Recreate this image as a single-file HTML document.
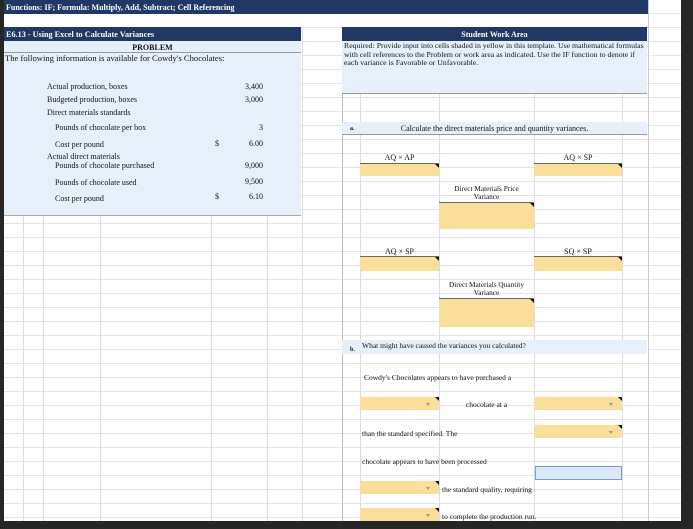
<!DOCTYPE html>
<html><head><meta charset="utf-8"><style>
*{margin:0;padding:0;box-sizing:border-box}
html,body{width:693px;height:529px;overflow:hidden;background:#262626}
#s{position:absolute;left:4px;top:0;width:677px;height:521px;background:#fff;
background-image:repeating-linear-gradient(to bottom,transparent 0,transparent 13px,#e3e3e3 13px,#e3e3e3 14px);background-position:0 0}
.v{position:absolute;top:0;height:521px;width:1px;background:#dcdcdc}
.a{position:absolute;font-family:"Liberation Serif",serif;font-size:8px;color:#111;white-space:nowrap;line-height:9px}
.n{background:#1f3864;position:absolute}
.lb{background:#e6f0fb;position:absolute}
.y{background:#fadf9a;position:absolute}
.y:after{content:"";position:absolute;right:0;top:0;border-top:4px solid #111;border-left:4px solid transparent}
.dd:before{content:"";position:absolute;right:9px;top:6px;border-top:3px solid #999;border-left:2px solid transparent;border-right:2px solid transparent}
.w{color:#fff;font-weight:bold}
.b{font-weight:bold}
</style></head><body>
<div id="s"></div>
<div class="v" style="left:23px"></div><div class="v" style="left:43px"></div><div class="v" style="left:100px"></div><div class="v" style="left:211px"></div><div class="v" style="left:267px"></div><div class="v" style="left:302px"></div><div class="v" style="left:342px;background:#bbb;top:94px;height:427px"></div><div class="v" style="left:360px"></div><div class="v" style="left:439px"></div><div class="v" style="left:534px"></div><div class="v" style="left:622px"></div><div class="v" style="left:648px;background:#ccc"></div>

<div class="n" style="left:4px;top:0;width:644px;height:14px"></div>
<div class="a w" style="left:6px;top:3px;font-size:8px">Functions: IF; Formula: Multiply, Add, Subtract; Cell Referencing</div>
<div style="position:absolute;left:4px;top:14px;width:644px;height:13px;background:#fff"></div>

<div class="n" style="left:4px;top:27px;width:297px;height:14px"></div>
<div class="a w" style="left:6px;top:30px;font-size:8.2px">E6.13 - Using Excel to Calculate Variances</div>
<div class="lb" style="left:4px;top:41px;width:297px;height:175px;border-bottom:1px solid #aaa"></div>
<div class="a b" style="left:4px;top:43px;width:297px;text-align:center">PROBLEM</div>
<div style="position:absolute;left:4px;top:52px;width:297px;height:1px;background:#999"></div>
<div class="a" style="left:5px;top:54px;font-size:8.6px">The following information is available for Cowdy's Chocolates:</div>
<div class="a" style="left:47px;top:82px">Actual production, boxes</div><div class="a" style="left:220px;top:82px;width:43px;text-align:right">3,400</div>
<div class="a" style="left:47px;top:95px">Budgeted production, boxes</div><div class="a" style="left:220px;top:95px;width:43px;text-align:right">3,000</div>
<div class="a" style="left:47px;top:108px">Direct materials standards</div>
<div class="a" style="left:55px;top:123px">Pounds of chocolate per box</div><div class="a" style="left:220px;top:123px;width:43px;text-align:right">3</div>
<div class="a" style="left:55px;top:140px">Cost per pound</div><div class="a" style="left:215px;top:139px">$</div><div class="a" style="left:220px;top:139px;width:43px;text-align:right">6.00</div>
<div class="a" style="left:47px;top:152px">Actual direct materials</div>
<div class="a" style="left:55px;top:161px">Pounds of chocolate purchased</div><div class="a" style="left:220px;top:161px;width:43px;text-align:right">9,000</div>
<div class="a" style="left:55px;top:178px">Pounds of chocolate used</div><div class="a" style="left:220px;top:177px;width:43px;text-align:right">9,500</div>
<div class="a" style="left:55px;top:194px">Cost per pound</div><div class="a" style="left:215px;top:192px">$</div><div class="a" style="left:220px;top:192px;width:43px;text-align:right">6.10</div>

<div class="n" style="left:342px;top:27px;width:305px;height:14px"></div>
<div class="a w" style="left:342px;top:30px;width:305px;text-align:center">Student Work Area</div>
<div class="lb" style="left:342px;top:41px;width:305px;height:53px;border-bottom:1px solid #999"></div>
<div class="a" style="left:344px;top:42px;line-height:8.5px;white-space:normal;width:302px;font-size:7.8px">Required: Provide input into cells shaded in yellow in this template. Use mathematical formulas with cell references to the Problem or work area as indicated. Use the IF function to denote if each variance is Favorable or Unfavorable.</div>

<div class="lb" style="left:342px;top:122px;width:305px;height:13px;border-bottom:1px solid #999"></div>
<div class="a b" style="left:350px;top:125px;font-size:6px">a.</div>
<div class="a" style="left:342px;top:124px;width:305px;text-align:center">Calculate the direct materials price and quantity variances.</div>

<div class="a" style="left:360px;top:153px;width:79px;text-align:center">AQ × AP</div>
<div class="a" style="left:534px;top:153px;width:88px;text-align:center">AQ × SP</div>
<div class="y" style="left:360px;top:163px;width:79px;height:13px;border-top:1px solid #666"></div>
<div class="y" style="left:534px;top:163px;width:88px;height:13px;border-top:1px solid #666"></div>
<div class="a" style="left:439px;top:185px;width:95px;text-align:center;font-size:7.3px;line-height:8px">Direct Materials Price<br>Variance</div>
<div class="y" style="left:439px;top:202px;width:95px;height:27px;border-top:1px solid #666"></div>

<div class="a" style="left:360px;top:247px;width:79px;text-align:center">AQ × SP</div>
<div class="a" style="left:534px;top:247px;width:88px;text-align:center">SQ × SP</div>
<div class="y" style="left:360px;top:256px;width:79px;height:15px;border-top:1px solid #666"></div>
<div class="y" style="left:534px;top:256px;width:88px;height:15px;border-top:1px solid #666"></div>
<div class="a" style="left:439px;top:281px;width:95px;text-align:center;font-size:7.3px;line-height:8px">Direct Materials Quantity<br>Variance</div>
<div class="y" style="left:439px;top:298px;width:95px;height:29px;border-top:1px solid #666"></div>

<div class="lb" style="left:342px;top:340px;width:305px;height:14px"></div>
<div class="a b" style="left:350px;top:346px;font-size:6px">b.</div>
<div class="a" style="left:362px;top:341px;font-size:7.5px">What might have caused the variances you calculated?</div>
<div class="a" style="left:364px;top:373px;font-size:7.5px">Cowdy's Chocolates appears to have purchased a</div>
<div class="y dd" style="left:360px;top:397px;width:79px;height:13px"></div>
<div class="a" style="left:439px;top:400px;width:95px;text-align:center;font-size:7.5px">chocolate at a</div>
<div class="y dd" style="left:534px;top:397px;width:88px;height:13px"></div>
<div class="a" style="left:362px;top:429px;font-size:7.5px">than the standard specified. The</div>
<div class="y dd" style="left:534px;top:425px;width:88px;height:13px"></div>
<div class="a" style="left:362px;top:457px;font-size:7.5px">chocolate appears to have been processed</div>
<div style="position:absolute;left:535px;top:466px;width:87px;height:14px;background:#d9e8fb;border:1px solid #7a9cc8"></div>
<div class="y dd" style="left:360px;top:481px;width:79px;height:13px"></div>
<div class="a" style="left:442px;top:485px;font-size:7.5px">the standard quality, requiring</div>
<div class="y dd" style="left:360px;top:508px;width:79px;height:13px"></div>
<div class="a" style="left:442px;top:512px;font-size:7.5px">to complete the production run.</div>
</body></html>
